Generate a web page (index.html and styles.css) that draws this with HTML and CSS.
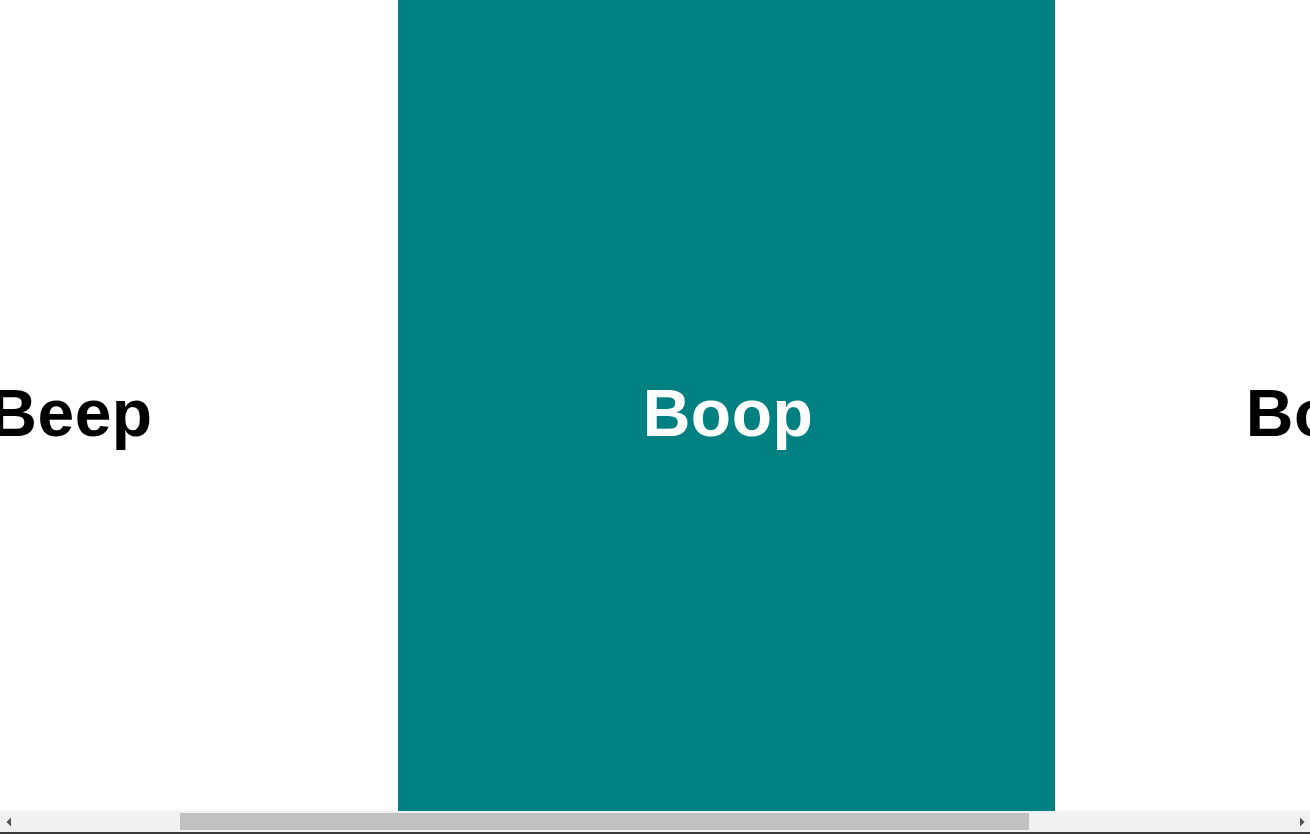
FILE: index.html
```html
<!DOCTYPE html>
<html lang="en">
<head>
<meta charset="utf-8">
<title>Beep Boop</title>
<link rel="stylesheet" href="styles.css">
</head>
<body>
<div class="frame">
  <div class="viewport">
    <div class="track">
      <section class="item"><span class="label">Beep</span></section>
      <section class="item item-teal"><span class="label">Boop</span></section>
      <section class="item"><span class="label">Bop Bop</span></section>
    </div>
  </div>
  <div class="scrollbar">
    <div class="sb-button">
      <svg width="6" height="10" viewBox="0 0 6 10"><polygon points="5,0.5 5,9.5 0.5,5" fill="#505050"/></svg>
    </div>
    <div class="sb-track"><div class="sb-thumb"></div></div>
    <div class="sb-button">
      <svg width="6" height="10" viewBox="0 0 6 10"><polygon points="1,0.5 1,9.5 5.5,5" fill="#505050"/></svg>
    </div>
  </div>
</div>
</body>
</html>
```
FILE: styles.css
```css
html, body {
  margin: 0;
  padding: 0;
  background: #ffffff;
  overflow: hidden;
}

.frame {
  width: 1310px;
  height: 834px;
  display: flex;
  flex-direction: column;
}

.viewport {
  flex: 0 0 811px;
  overflow: hidden;
}

.track {
  display: flex;
  height: 100%;
  margin-left: -259px;
}

.item {
  flex: 0 0 657px;
  display: flex;
  align-items: center;
  justify-content: center;
  box-sizing: border-box;
  padding-top: 15px;
  padding-left: 3px;
  font-family: "Liberation Sans", Arial, sans-serif;
  font-weight: bold;
  font-size: 66px;
  letter-spacing: 0.5px;
  color: #000000;
  white-space: nowrap;
}

.item-teal {
  background: #008080;
  color: #ffffff;
}

.scrollbar {
  flex: 0 0 21px;
  display: flex;
  background: #f1f1f1;
  border-bottom: 2px solid #3a3a3a;
}

.sb-button {
  flex: 0 0 17px;
  display: flex;
  align-items: center;
  justify-content: center;
  padding-top: 1px;
  box-sizing: border-box;
}

.sb-button svg {
  display: block;
}

.sb-track {
  flex: 1;
  display: flex;
  align-items: flex-start;
}

.sb-thumb {
  margin-top: 2px;
  margin-left: 163px;
  width: 849px;
  height: 17px;
  background: #c1c1c1;
}
```
